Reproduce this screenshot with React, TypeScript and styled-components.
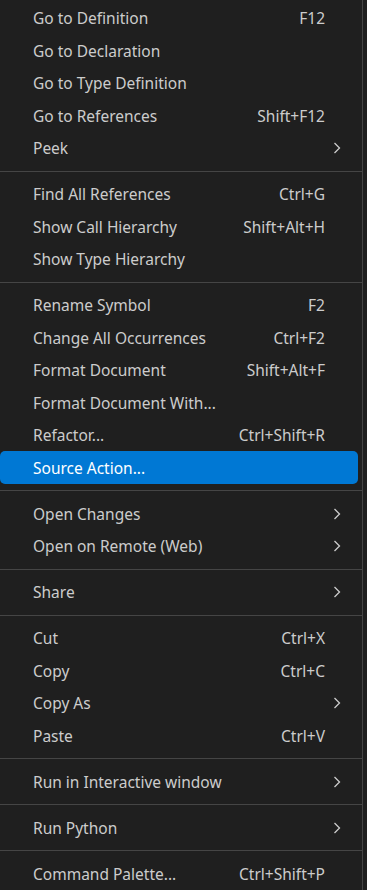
import React from "react";
import styled, { createGlobalStyle } from "styled-components";

const Global = createGlobalStyle`
  html, body { margin: 0; padding: 0; background: #1f1f1f; }
  body { width: 367px; height: 890px; overflow: hidden; }
  #root { display: flex; }
`;

const Menu = styled.div`
  width: 363px;
  height: 890px;
  box-sizing: border-box;
  padding-top: 1.75px;
  background: #1f1f1f;
  border-right: 1px solid #454545;
  display: flex;
  flex-direction: column;
  font-family: "Noto Sans", "Open Sans", sans-serif;
  font-size: 15.5px;
  color: #cccccc;
`;

const Item = styled.div<{ $active?: boolean }>`
  height: 32.5px;
  flex: 0 0 32.5px;
  margin-right: 4px;
  display: flex;
  align-items: center;
  border-radius: 5px;
  padding-left: 33px;
  padding-right: 33px;
  position: relative;
  background: ${(p) => (p.$active ? "#0078d4" : "transparent")};
  color: ${(p) => (p.$active ? "#ffffff" : "#cccccc")};
`;

const Label = styled.span`
  flex: 1;
  white-space: nowrap;
`;

const Key = styled.span`
  white-space: nowrap;
`;

const Chevron = styled.svg`
  position: absolute;
  right: 17px;
  top: 50%;
  margin-top: -6px;
  width: 8px;
  height: 12px;
`;

const Separator = styled.div`
  flex: 0 0 13.5px;
  display: flex;
  align-items: center;
  &::after {
    content: "";
    display: block;
    width: 100%;
    height: 1px;
    background: #454545;
  }
`;

const Spacer = styled.div`
  flex: 1;
  background: #1f1f1f;
`;

type Entry =
  | { sep: true }
  | { label: string; key?: string; sub?: boolean; active?: boolean; sep?: false };

const entries: Entry[] = [
  { label: "Go to Definition", key: "F12" },
  { label: "Go to Declaration" },
  { label: "Go to Type Definition" },
  { label: "Go to References", key: "Shift+F12" },
  { label: "Peek", sub: true },
  { sep: true },
  { label: "Find All References", key: "Ctrl+G" },
  { label: "Show Call Hierarchy", key: "Shift+Alt+H" },
  { label: "Show Type Hierarchy" },
  { sep: true },
  { label: "Rename Symbol", key: "F2" },
  { label: "Change All Occurrences", key: "Ctrl+F2" },
  { label: "Format Document", key: "Shift+Alt+F" },
  { label: "Format Document With..." },
  { label: "Refactor...", key: "Ctrl+Shift+R" },
  { label: "Source Action...", active: true },
  { sep: true },
  { label: "Open Changes", sub: true },
  { label: "Open on Remote (Web)", sub: true },
  { sep: true },
  { label: "Share", sub: true },
  { sep: true },
  { label: "Cut", key: "Ctrl+X" },
  { label: "Copy", key: "Ctrl+C" },
  { label: "Copy As", sub: true },
  { label: "Paste", key: "Ctrl+V" },
  { sep: true },
  { label: "Run in Interactive window", sub: true },
  { sep: true },
  { label: "Run Python", sub: true },
  { sep: true },
  { label: "Command Palette...", key: "Ctrl+Shift+P" },
];

export default function App() {
  return (
    <>
      <Global />
      <Menu>
        {entries.map((e, i) =>
          e.sep ? (
            <Separator key={i} />
          ) : (
            <Item key={i} $active={e.active}>
              <Label>{e.label}</Label>
              {e.key && <Key>{e.key}</Key>}
              {e.sub && (
                <Chevron viewBox="0 0 8 12">
                  <polyline
                    points="1.5,1 6.5,6 1.5,11"
                    fill="none"
                    stroke="#cccccc"
                    strokeWidth="1.3"
                  />
                </Chevron>
              )}
            </Item>
          )
        )}
      </Menu>
      <Spacer />
    </>
  );
}
